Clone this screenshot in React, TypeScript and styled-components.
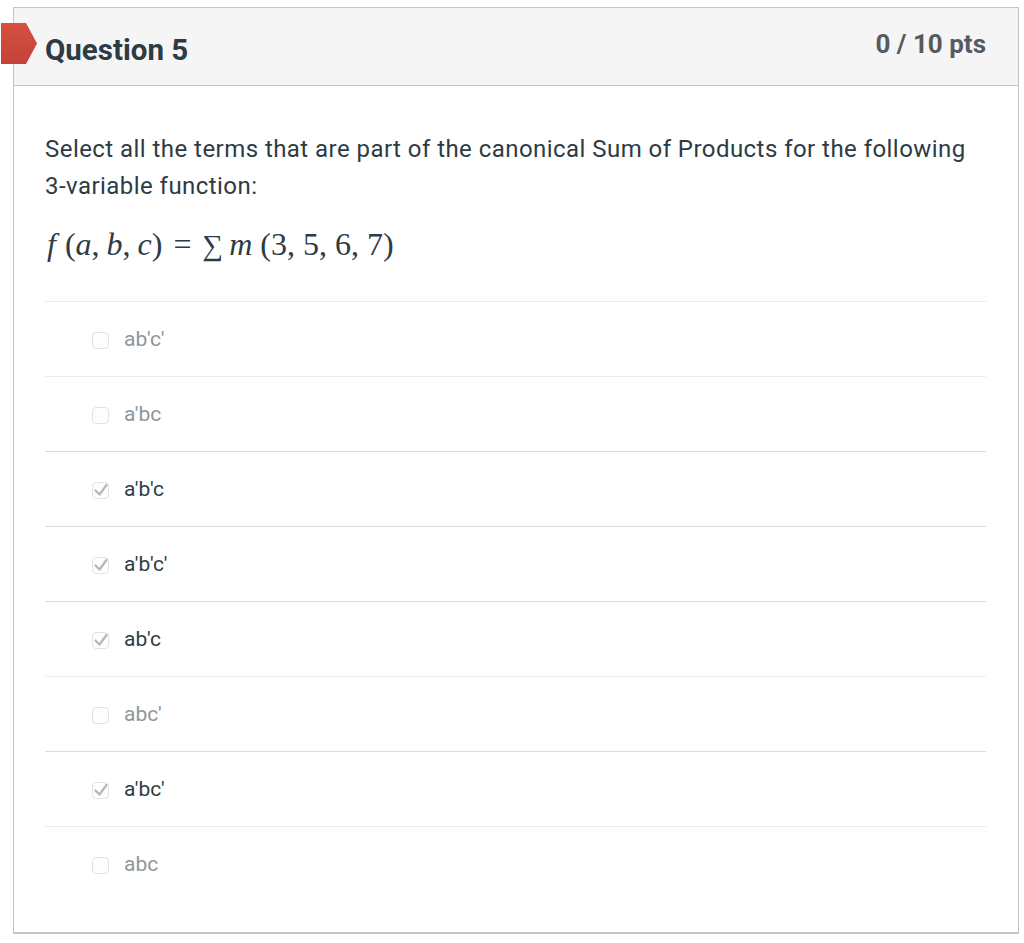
import React from "react";
import styled, { createGlobalStyle } from "styled-components";

const GlobalStyle = createGlobalStyle`
    body {
        margin: 0;
        background: #fff;
        font-family: Roboto, "Liberation Sans", sans-serif;
    }
`;

const Page = styled.div`
    padding: 7px 5px 0 13px;
`;

const Card = styled.div`
    position: relative;
    border: 1px solid #c4c4c4;
    border-bottom-width: 2px;
    background: #fff;
`;

const Flag = styled.div`
    position: absolute;
    left: -13px;
    top: 15px;
    width: 36px;
    height: 41px;
    background: linear-gradient(#d4503f, #c4413a);
    clip-path: polygon(0 0, 25px 0, 36px 50%, 25px 100%, 0 100%);
`;

const Header = styled.div`
    display: flex;
    justify-content: space-between;
    align-items: flex-start;
    height: 77px;
    padding: 0 32px 0 31px;
    background: #f5f5f5;
    border-bottom: 1px solid #c4c4c4;
`;

const Title = styled.h2`
    margin: 25px 0 0;
    font-size: 29.5px;
    font-weight: 700;
    color: #2d3b45;
    line-height: 34px;
`;

const Points = styled.div`
    margin-top: 19px;
    font-size: 26px;
    font-weight: 700;
    color: #555a5e;
    line-height: 34px;
`;

const Body = styled.div`
    padding: 45px 32px 31px 31px;
`;

const Prompt = styled.p`
    margin: 0;
    font-size: 24px;
    letter-spacing: 0.45px;
    line-height: 37px;
    color: #2d3b45;
`;

const MathLine = styled.div`
    margin: 19px 0 0 2px;
    font-family: "Liberation Serif", "DejaVu Serif", serif;
    font-size: 32px;
    line-height: 40px;
    color: #2d3b45;
    white-space: nowrap;
`;

const Var = styled.i`
    font-style: italic;
`;

const Gap = styled.span<{ $w: number }>`
    display: inline-block;
    width: ${p => p.$w}px;
`;

const Sum = styled.span`
    font-size: 29px;
`;

const Answers = styled.div`
    margin-top: 36px;
`;

const Row = styled.div<{ $checked: boolean }>`
    display: flex;
    align-items: center;
    height: 74px;
    border-top: 1px solid ${p => (p.$checked ? "#dadddf" : "#ececec")};
    padding-left: 47px;
    gap: 15px;
`;

const Box = styled.span`
    display: inline-flex;
    align-items: center;
    justify-content: center;
    width: 15px;
    height: 15px;
    border: 1px solid #e3e3e3;
    border-radius: 4px;
    background: #fdfdfd;
    margin-top: 2px;
`;

const Label = styled.span<{ $checked: boolean }>`
    font-size: 21px;
    color: ${p => (p.$checked ? "#2d3b45" : "#8e969c")};
`;

const answers = [
    { text: "ab'c'", checked: false },
    { text: "a'bc", checked: false },
    { text: "a'b'c", checked: true },
    { text: "a'b'c'", checked: true },
    { text: "ab'c", checked: true },
    { text: "abc'", checked: false },
    { text: "a'bc'", checked: true },
    { text: "abc", checked: false },
];

const Check = () => (
    <svg width="14" height="14" viewBox="0 0 14 14">
        <path d="M1.5 7.5 L5.5 11.5 L12.5 2" fill="none" stroke="#b3b7ba" strokeWidth="2.2" strokeLinecap="round" strokeLinejoin="round" />
    </svg>
);

export default function App() {
    return (
        <>
            <GlobalStyle />
            <Page>
                <Card>
                    <Flag />
                    <Header>
                        <Title>Question 5</Title>
                        <Points>0 / 10 pts</Points>
                    </Header>
                    <Body>
                        <Prompt>
                            Select all the terms that are part of the canonical Sum of Products for the following
                            3-variable function:
                        </Prompt>
                        <MathLine>
                            <Var>f</Var>
                            <Gap $w={9} />(<Var>a</Var>,<Gap $w={7} /><Var>b</Var>,<Gap $w={7} /><Var>c</Var>)
                            <Gap $w={11} />=<Gap $w={11} />
                            <Sum>∑</Sum>
                            <Gap $w={6} />
                            <Var>m</Var>
                            <Gap $w={8} />(3,<Gap $w={8} />5,<Gap $w={8} />6,<Gap $w={8} />7)
                        </MathLine>
                        <Answers>
                            {answers.map((a, i) => (
                                <Row key={i} $checked={a.checked}>
                                    <Box>{a.checked && <Check />}</Box>
                                    <Label $checked={a.checked}>{a.text}</Label>
                                </Row>
                            ))}
                        </Answers>
                    </Body>
                </Card>
            </Page>
        </>
    );
}
